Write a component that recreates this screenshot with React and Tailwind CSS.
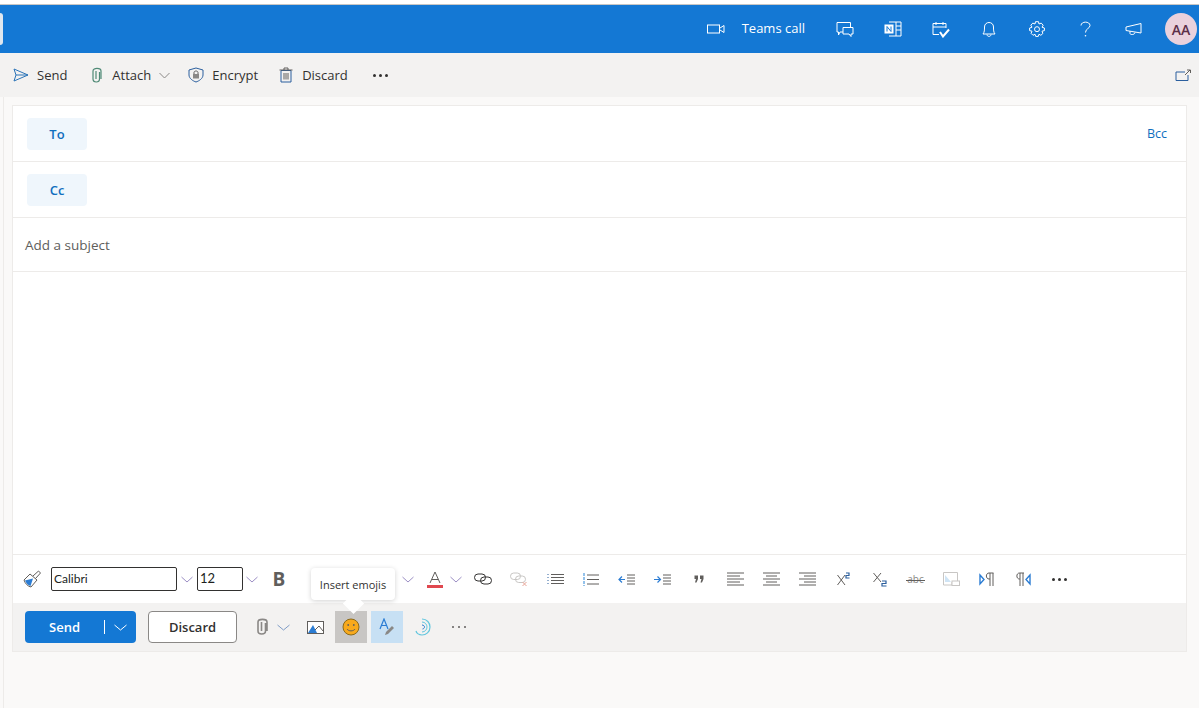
import React from "react";

const font = { fontFamily: "'Open Sans', 'Noto Sans', sans-serif" };

// small svg wrapper so every icon sits on its own pixel box
const Svg = ({ w = 16, h = 16, children, className = "" }) => (
  <svg width={w} height={h} viewBox={`0 0 ${w} ${h}`} fill="none" className={`shrink-0 ${className}`}>
    {children}
  </svg>
);

const Chevron = ({ color = "#8a8886", w = 11 }) => (
  <Svg w={w} h={7}>
    <path d={`M0.5 1 L${w / 2} 6 L${w - 0.5} 1`} stroke={color} strokeWidth="1" />
  </Svg>
);

const Lines = ({ rows }) => (
  <Svg w={17} h={14}>
    {rows.map(([x1, x2], i) => (
      <path key={i} d={`M${x1} ${1 + i * 3} H${x2}`} stroke="#605e5c" strokeWidth="1" />
    ))}
  </Svg>
);

const Clip = ({ color, w = 11, h = 18, sw = 1.2, className = "" }) => (
  <Svg w={w} h={h} className={className}>
    <path
      d={`M${w - 2.5} 5 V${h - 5} C${w - 2.5} ${h - 1} 2 ${h - 1} 2 ${h - 5} V4 C2 0.5 ${w - 1} 0.5 ${w - 1} 4 V${h - 5}`}
      stroke={color}
      strokeWidth={sw}
    />
    <path d={`M${w / 2 - 0.5} 4 V${h - 5}`} stroke={color} strokeWidth={sw} />
  </Svg>
);

const HeaderBtn = ({ children }) => (
  <div className="w-12 h-12 flex items-center justify-center">{children}</div>
);

const TopIcons = [
  // chat
  <Svg w={18} h={16} key="chat">
    <path d="M1 1.5 H14.5 V6 M7 11 H4 L2.5 14 V11 H1 V1.5" stroke="#fff" />
    <path d="M7 6.5 H17 V13 H15 V15.5 L13 13 H7 Z" stroke="#fff" />
  </Svg>,
  // onenote
  <Svg w={18} h={16} key="note">
    <path d="M5 1 H17 V15 H5" stroke="#fff" />
    <path d="M12 1 V15 M12 5 H17 M12 9 H17" stroke="#fff" />
    <rect x="0.5" y="3.5" width="9" height="9" fill="#fff" />
    <path d="M3 10.5 V5.5 L7 10.5 V5.5" stroke="#1478d4" />
  </Svg>,
  // to do
  <Svg w={18} h={17} key="todo">
    <path d="M7 13.5 H1 V2.5 H14 V7 M1 6 H14 M4 1 V4 M11 1 V4" stroke="#fff" />
    <path d="M8 11 L11 15.5 L17 8.5" stroke="#fff" strokeWidth="2" />
  </Svg>,
  // bell
  <Svg w={14} h={16} key="bell">
    <path d="M1 13 H13 C11.5 11 11.5 9 11.5 6 C11.5 0 2.5 0 2.5 6 C2.5 9 2.5 11 1 13 Z" stroke="#fff" />
    <path d="M5 13.5 C5 16 9 16 9 13.5" stroke="#fff" />
  </Svg>,
  // settings
  <Svg w={16} h={16} key="gear">
    <path
      d="M6.5 0.7 H9.5 L10 3 L12.2 2.1 L14.2 4.2 L13 6.2 L15.4 7 V9.6 L13 10.2 L13.9 12.4 L11.9 14.3 L10 13.2 L9.3 15.4 H6.7 L6 13.2 L4 14.3 L2.1 12.4 L3 10.2 L0.6 9.6 V7 L3 6.2 L1.8 4.2 L3.8 2.1 L6 3 Z"
      stroke="#fff"
      strokeLinejoin="round"
    />
    <circle cx="8" cy="8.2" r="2.5" stroke="#fff" />
  </Svg>,
  // help
  <Svg w={11} h={16} key="help">
    <path d="M1 4.5 C1 0 10 0 10 4.5 C10 7.5 5.5 7.5 5.5 11.5" stroke="#fff" />
    <circle cx="5.5" cy="14.7" r="0.8" fill="#fff" />
  </Svg>,
  // feedback
  <Svg w={17} h={14} key="mega">
    <path d="M1 5 L16 1.5 V11 L1 8.5 Z" stroke="#fff" />
    <path d="M5 9 V11.5 C5 13 10 13 10 10.5" stroke="#fff" />
  </Svg>,
];

const ActionBtn = ({ icon, label, className = "" }) => (
  <div className={`flex items-center h-11 ${className}`}>
    {icon}
    <span className="text-[13px] pt-[2px] text-[#323130]">{label}</span>
  </div>
);

const DotsBtn = ({ color = "#323130", size = "w-[3px] h-[3px]", gap = "gap-[3px]" }) => (
  <div className={`flex items-center ${gap}`}>
    <span className={`${size} rounded-full`} style={{ background: color }} />
    <span className={`${size} rounded-full`} style={{ background: color }} />
    <span className={`${size} rounded-full`} style={{ background: color }} />
  </div>
);

const RecipientRow = ({ label, right }) => (
  <div className="h-[56px] border-b border-[#edebe9] flex items-center pl-[14px] pr-[19px] justify-between">
    <div className="w-[60px] h-8 pt-[2px] rounded-sm bg-[#eff6fc] flex items-center justify-center text-[13px] font-semibold text-[#106ebe]">
      {label}
    </div>
    {right}
  </div>
);

const FmtBtn = ({ children, className = "w-9" }) => (
  <div className={`${className} h-8 shrink-0 flex items-center justify-center`}>{children}</div>
);

const SizeInput = ({ value, w, text = "text-[12px]" }) => (
  <div
    className={`${w} ${text} h-6 border border-[#323130] rounded-[2px] bg-white flex items-center pl-[2px] text-[#201f1e]`}
    style={{ fontFamily: "Lato, sans-serif" }}
  >
    {value}
  </div>
);

const fmtChevron = "#9b8ec4";

const App = () => {
  return (
    <div className="w-[1199px] h-[708px] overflow-hidden bg-[#faf9f8] flex flex-col" style={font}>
      <div className="h-[5px] bg-white border-b border-[#c8c6c4]" />

      {/* top bar */}
      <div className="h-12 bg-[#1478d4] flex items-center justify-between pr-[2px]">
        <div className="w-[3px] h-8 bg-[#dfe7ef] rounded-r-sm" />
        <div className="flex items-center">
          <Svg w={18} h={10} className="mr-[17px]">
            <rect x="0.5" y="1" width="12" height="8" stroke="#fff" />
            <path d="M13 4 L17 1.5 V8.5 L13 6" stroke="#fff" />
          </Svg>
          <span className="text-[13px] text-white mr-[16px]">Teams call</span>
          {TopIcons.map((icon, i) => (
            <HeaderBtn key={i}>{icon}</HeaderBtn>
          ))}
          <div className="ml-2 w-8 h-8 rounded-full bg-[#ead1dc] flex items-center justify-center text-[14px] font-semibold text-[#5c2e48]">
            AA
          </div>
        </div>
      </div>

      {/* command bar */}
      <div className="h-11 bg-[#f3f2f1] flex items-center pl-[13px] pr-[8px]">
        <ActionBtn
          label="Send"
          icon={
            <Svg w={16} h={14} className="mr-2">
              <path d="M1 1 L15 7 L1 13 L3 7 Z M3 7 H15" stroke="#2b74b8" />
            </Svg>
          }
        />
        <ActionBtn
          label="Attach"
          className="ml-[24px]"
          icon={<Clip color="#4f8a76" w={11} h={17} className="mr-[10px]" />}
        />
        <div className="ml-[8px]">
          <Chevron />
        </div>
        <ActionBtn
          label="Encrypt"
          className="ml-[18px]"
          icon={
            <Svg w={16} h={16} className="mr-2">
              <path d="M8 1 L15 3 V8 C15 11.5 11 14 8 15 C5 14 1 11.5 1 8 V3 Z" stroke="#2b5f9e" />
              <rect x="5" y="7" width="6" height="4.5" fill="#8a8886" />
              <path d="M6 7 V5.5 C6 3.5 10 3.5 10 5.5 V7" stroke="#605e5c" />
            </Svg>
          }
        />
        <ActionBtn
          label="Discard"
          className="ml-[21px]"
          icon={
            <Svg w={14} h={16} className="mr-[9px]">
              <path d="M2 3.5 H12 V15 H2 Z" stroke="#2b5f9e" />
              <path d="M0.5 3 H13.5 M5 3 V1 H9 V3" stroke="#605e5c" />
              <path d="M5 6 V12.5 M7 6 V12.5 M9 6 V12.5" stroke="#605e5c" />
            </Svg>
          }
        />
        <div className="ml-[25px]">
          <DotsBtn />
        </div>
        <Svg w={16} h={12} className="ml-auto">
          <path d="M10 3 H1 V11.5 H13 V6" stroke="#2b5f9e" />
          <path d="M10 6 L15 1 M12 1 H15.5 V4" stroke="#605e5c" />
        </Svg>
      </div>

      {/* compose area */}
      <div className="flex-1 flex pl-[3px]">
        <div className="flex-1 border-l border-[#edebe9] pl-2 pr-3 pt-2">
          <div className="h-[547px] border border-[#edebe9] bg-white flex flex-col">
            <RecipientRow label="To" right={<span className="text-[12.5px] pt-[2px] text-[#106ebe]">Bcc</span>} />
            <RecipientRow label="Cc" />
            <div className="h-[54px] pt-px border-b border-[#edebe9] flex items-center pl-3 text-[13.5px] text-[#605e5c]">
              Add a subject
            </div>
            <div className="flex-1 border-b border-[#edebe9]" />

            {/* formatting toolbar */}
            <div className="h-12 flex items-center pl-[10px]">
              <Svg w={18} h={18} className="mr-[10px]">
                <path d="M7 4 L14 10 L8 17 C5 16.5 2 13.5 1 10 Z" fill="#fff" stroke="#605e5c" />
                <path d="M2 10.5 L10 8.5 L7.5 16 C5 15.5 3 13 2 10.5 Z" fill="#2b7cd3" />
                <path d="M10 6 L15.5 1 L17.5 3 L12.5 8.5" stroke="#605e5c" />
              </Svg>
              <SizeInput value="Calibri" w="w-[126px]" />
              <div className="w-[20px] flex justify-center">
                <Chevron color={fmtChevron} w={12} />
              </div>
              <SizeInput value="12" w="w-[46px]" text="text-[13px]" />
              <div className="w-[18px] flex justify-center">
                <Chevron color={fmtChevron} w={12} />
              </div>
              <FmtBtn>
                <span className="text-[19px] font-bold text-[#605e5c]">B</span>
              </FmtBtn>
              <div className="w-[105px]" />
              <Chevron color={fmtChevron} w={12} />
              <FmtBtn className="w-9 pl-[6px]">
                <Svg w={16} h={17}>
                  <path d="M3 12 L8 1 L13 12 M5 8.5 H11" stroke="#605e5c" />
                  <rect x="0" y="14" width="16" height="3" fill="#e0484f" />
                </Svg>
              </FmtBtn>
              <Chevron color={fmtChevron} w={12} />
              <FmtBtn className="w-[39px] pl-[3px]">
                <Svg w={18} h={12}>
                  <rect x="0.5" y="1" width="11" height="7" rx="3.5" stroke="#323130" />
                  <rect x="6.5" y="4" width="11" height="7" rx="3.5" stroke="#323130" />
                </Svg>
              </FmtBtn>
              <FmtBtn>
                <Svg w={18} h={15}>
                  <rect x="0.5" y="1" width="10" height="6.5" rx="3.2" stroke="#c8c6c4" />
                  <rect x="5.5" y="4" width="10" height="6.5" rx="3.2" stroke="#c8c6c4" />
                  <path d="M12.5 10 L16.5 14 M16.5 10 L12.5 14" stroke="#e8a598" />
                </Svg>
              </FmtBtn>
              <FmtBtn>
                <Svg w={17} h={12}>
                  <path d="M4 1.5 H17 M4 4.5 H17 M4 7.5 H17 M4 10.5 H17" stroke="#605e5c" />
                  <path d="M1 1 V2 M1 4 V5 M1 7 V8 M1 10 V11" stroke="#2b5f9e" />
                </Svg>
              </FmtBtn>
              <FmtBtn>
                <Svg w={16} h={13}>
                  <path d="M4 2 H16 M4 6.5 H16 M4 11 H16" stroke="#605e5c" />
                  <path d="M1 0 V13" stroke="#71afe5" strokeWidth="1.5" strokeDasharray="3 1" />
                </Svg>
              </FmtBtn>
              <FmtBtn>
                <Svg w={18} h={11}>
                  <path d="M9 1 H17 M9 4 H17 M9 7 H17 M9 10 H17" stroke="#605e5c" />
                  <path d="M7 5.5 H1 M4 2.5 L1 5.5 L4 8.5" stroke="#2b7cd3" strokeWidth="1.2" />
                </Svg>
              </FmtBtn>
              <FmtBtn>
                <Svg w={18} h={11}>
                  <path d="M9 1 H17 M9 4 H17 M9 7 H17 M9 10 H17" stroke="#605e5c" />
                  <path d="M0 5.5 H6 M3.5 2.5 L6.5 5.5 L3.5 8.5" stroke="#2b7cd3" strokeWidth="1.2" />
                </Svg>
              </FmtBtn>
              <FmtBtn>
                <Svg w={10} h={8}>
                  <path d="M0.5 0.5 H4 V4 L2.5 7.5 H1 L2 4 H0.5 Z M6 0.5 H9.5 V4 L8 7.5 H6.5 L7.5 4 H6 Z" fill="#605e5c" />
                </Svg>
              </FmtBtn>
              <FmtBtn>
                <Lines rows={[[0, 17], [0, 13], [0, 17], [0, 13], [0, 17]]} />
              </FmtBtn>
              <FmtBtn>
                <Lines rows={[[0, 17], [3, 14], [0, 17], [3, 14], [0, 17]]} />
              </FmtBtn>
              <FmtBtn>
                <Lines rows={[[0, 17], [5, 17], [0, 17], [5, 17], [0, 17]]} />
              </FmtBtn>
              <FmtBtn className="w-[37px]">
                <Svg w={13} h={14}>
                  <path d="M0.5 3 L8 13 M8 3 L0.5 13" stroke="#605e5c" />
                  <path d="M9 1 H12 V3.5 H9 V6 H12.5" stroke="#2b5f9e" strokeWidth="1.2" />
                </Svg>
              </FmtBtn>
              <FmtBtn>
                <Svg w={14} h={15}>
                  <path d="M0.5 1 L8 10 M8 1 L0.5 10" stroke="#605e5c" />
                  <path d="M9 9 H13 V11.5 H9 V14 H13.5" stroke="#2b5f9e" strokeWidth="1.2" />
                </Svg>
              </FmtBtn>
              <FmtBtn className="w-[35px]">
                <span className="relative text-[10px] leading-none text-[#8a8886]">
                  abc
                  <span className="absolute left-[-1px] right-[-1px] top-[6px] h-px bg-[#605e5c]" />
                </span>
              </FmtBtn>
              <FmtBtn>
                <Svg w={17} h={14}>
                  <path d="M0.5 0.5 H14.5 V10 H9 V13 H0.5 Z" stroke="#c8c6c4" />
                  <path d="M2 3 L8 10 H2 Z" fill="#cfe4f5" />
                  <rect x="9" y="9" width="7.5" height="4.5" fill="#fff" stroke="#c8c6c4" />
                </Svg>
              </FmtBtn>
              <FmtBtn>
                <Svg w={16} h={15}>
                  <path d="M1 3 L5 7.5 L1 12 Z" stroke="#2b7cd3" strokeWidth="1.4" />
                  <path d="M14.5 1 H10 C6.5 1 6.5 7 10 7 H11 M11 1 V14 M14 1 V14" stroke="#605e5c" />
                </Svg>
              </FmtBtn>
              <FmtBtn>
                <Svg w={16} h={15}>
                  <path d="M15 3 L11 7.5 L15 12 Z" stroke="#2b7cd3" strokeWidth="1.4" />
                  <path d="M9 1 H4.5 C1 1 1 7 4.5 7 H5 M5 1 V14 M8 1 V14" stroke="#605e5c" />
                </Svg>
              </FmtBtn>
              <FmtBtn>
                <DotsBtn />
              </FmtBtn>
            </div>

            {/* send bar */}
            <div className="relative h-12 bg-[#f3f2f1] flex items-center pl-3">
              <div className="w-[111px] h-8 bg-[#1478d4] rounded-sm flex items-center text-white">
                <span className="w-[79px] pt-[2px] text-center text-[13px] font-semibold">Send</span>
                <span className="w-px h-[14px] bg-white" />
                <span className="flex-1 flex justify-center">
                  <Chevron color="#fff" w={13} />
                </span>
              </div>
              <div className="ml-3 w-[89px] h-8 pt-[2px] bg-white border border-[#8a8886] rounded-sm flex items-center justify-center text-[13px] font-semibold text-[#323130]">
                Discard
              </div>
              <div className="ml-[19px] mr-[9px]">
                <Clip color="#8a8886" w={12} h={18} sw={1.6} />
              </div>
              <Chevron color="#7f9cc7" w={13} />
              <div className="w-[45px] flex items-center justify-center pl-[6px]">
                <Svg w={17} h={13}>
                  <rect x="0.5" y="0.5" width="16" height="12" fill="#fff" stroke="#605e5c" />
                  <path d="M1 12 L6 4 L10 12 Z" fill="#2b7cd3" />
                  <path d="M8 9 L12 5 L16 10" stroke="#605e5c" />
                </Svg>
              </div>
              <div className="w-8 h-8 bg-[#c8c6c4] flex items-center justify-center">
                <Svg w={18} h={18}>
                  <circle cx="9" cy="9" r="8" fill="#f8a91c" stroke="#8a6a1c" />
                  <circle cx="6.2" cy="7" r="0.9" fill="#605e5c" />
                  <circle cx="11.8" cy="7" r="0.9" fill="#605e5c" />
                  <path d="M5 11 C6.5 13.5 11.5 13.5 13 11" stroke="#605e5c" />
                </Svg>
              </div>
              <div className="ml-1 w-8 h-8 bg-[#c7e0f4] flex items-center justify-center">
                <Svg w={16} h={18}>
                  <path d="M1 11 L5 1 L9 11 M2.5 7.5 H7.5" stroke="#2b7cd3" strokeWidth="1.2" />
                  <path d="M6 17 L7 14 L13 8 L15 10 L9 16 Z" fill="#8a8886" />
                </Svg>
              </div>
              <div className="w-10 flex justify-center">
                <Svg w={16} h={18}>
                  <path d="M7 1 C12 1 15 5 15 9 C15 14 11 17 7 17 C4 17 1.5 15 1 13" stroke="#62c6de" strokeWidth="1.2" />
                  <path d="M7 4 C10 4 12 6.5 12 9 C12 11.5 10 14 7 14" stroke="#62c6de" />
                  <path d="M7 7 C8.5 7 9.5 8 9.5 9 C9.5 10 8.5 11 7.5 11" stroke="#2b7cd3" />
                </Svg>
              </div>
              <div className="ml-[9px]">
                <DotsBtn color="#605e5c" size="w-[2px] h-[2px]" gap="gap-[4px]" />
              </div>

              {/* tooltip over the toolbar */}
              <div className="absolute left-[298px] top-[-35px] w-[84px] h-8 pt-[2px] bg-white rounded-sm shadow-[0_1px_5px_rgba(0,0,0,0.18)] flex items-center justify-center text-[11px] text-[#323130] whitespace-nowrap">
                Insert emojis
                <span className="absolute left-[35px] top-[28px] w-[15px] h-[15px] rotate-45 bg-white" />
              </div>
            </div>
          </div>
        </div>
      </div>
    </div>
  );
};

export default App;
